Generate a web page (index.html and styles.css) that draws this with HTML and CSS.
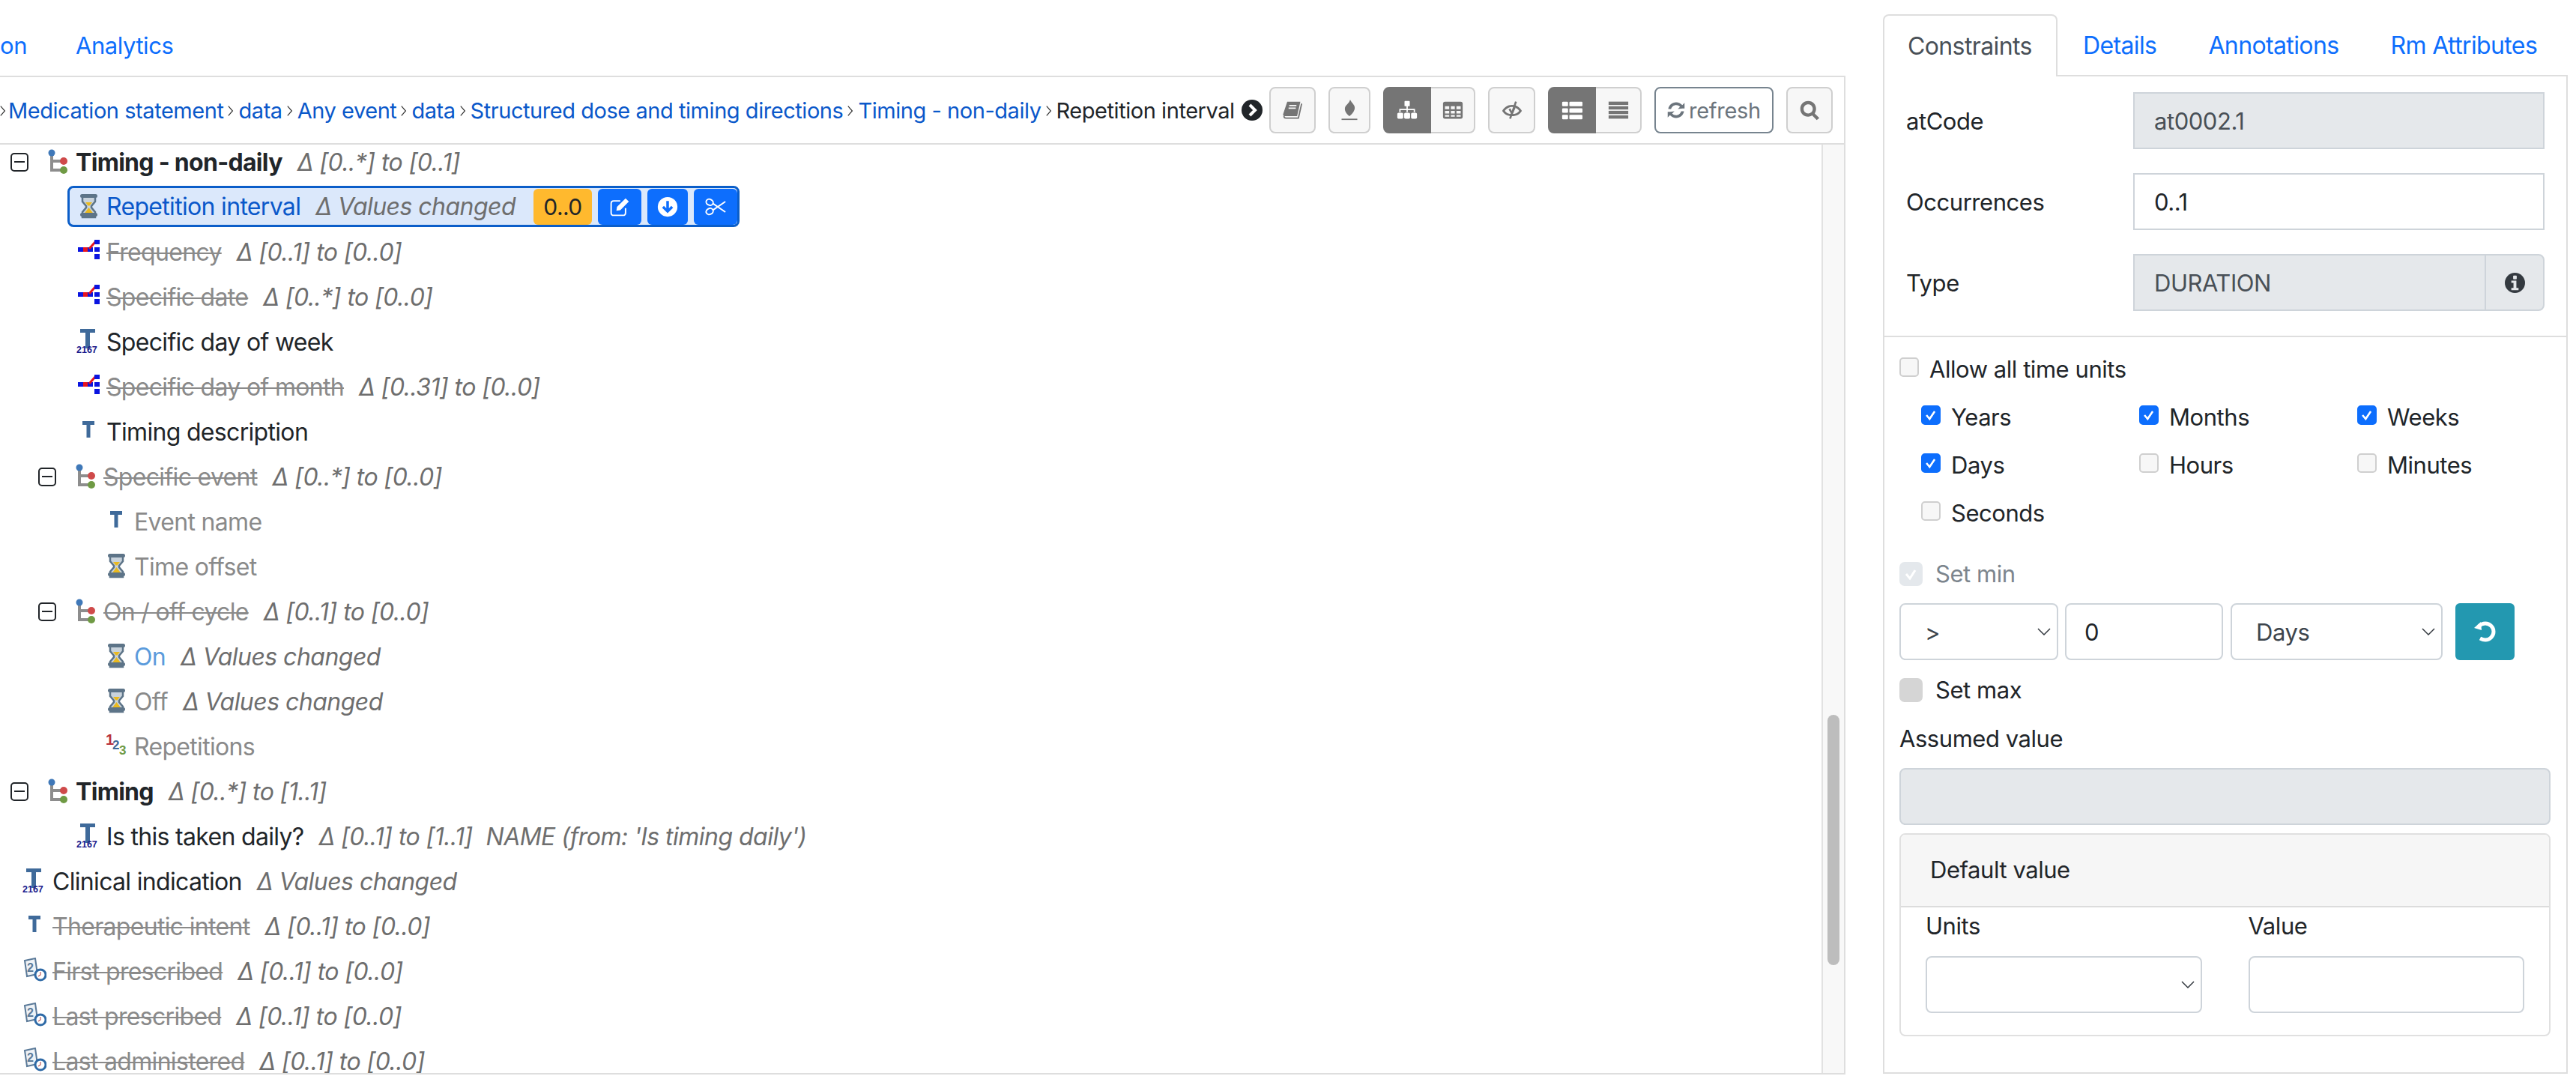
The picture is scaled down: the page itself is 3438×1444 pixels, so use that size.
FILE: index.html
```html
<!DOCTYPE html>
<html lang="en">
<head>
<meta charset="utf-8">
<title>Template editor</title>
<link rel="stylesheet" href="styles.css">
</head>
<body>
<svg class="defs" aria-hidden="true">
  <symbol id="i-hour" viewBox="0 0 32 36">
    <path d="M8 4h17v7l-5 6v2l5 6v7H8v-7l5-6v-2l-5-6z" fill="#c9d3dc" stroke="#5d7488" stroke-width="2.500"/>
    <path d="M12 12h9l-3.500 4.500h-2zM16.500 19l6 8H10.500z" fill="#e9b91f"/>
    <rect x="5" y="1" width="23" height="5" rx="2.500" fill="#5d7488"/>
    <rect x="5" y="26" width="23" height="5" rx="2.500" fill="#5d7488"/>
  </symbol>
  <symbol id="i-clu" viewBox="0 0 32 36">
    <path d="M9 6v23h12M9 17h12" fill="none" stroke="#8d8d8d" stroke-width="4"/>
    <circle cx="9" cy="6" r="4.500" fill="#3f78b8"/>
    <circle cx="25" cy="17" r="5" fill="#cf4a4a"/>
    <circle cx="25" cy="29" r="5" fill="#6f9a44"/>
  </symbol>
  <symbol id="i-code" viewBox="0 0 32 36">
    <path d="M2 15h20" stroke="#0a14e0" stroke-width="6"/>
    <path d="M9 15h6" stroke="#e8141e" stroke-width="6"/>
    <path d="M17 14l8-9" stroke="#e8141e" stroke-width="3"/>
    <rect x="24" y="2" width="7" height="6" fill="#0a14e0"/>
    <rect x="24" y="12" width="7" height="6" fill="#0a14e0"/>
    <rect x="24" y="21" width="7" height="7" fill="#0a14e0"/>
  </symbol>
  <symbol id="i-t" viewBox="0 0 32 36">
    <path d="M8 4h16v5h-5.500v17h-5V9H8z" fill="#3f6a9a"/>
  </symbol>
  <symbol id="i-tn" viewBox="0 0 32 36">
    <path d="M5 1h20v5h-7v21h-6V6H5z" fill="#3f6a9a"/>
    <text x="0" y="33" class="tiny">2167</text>
  </symbol>
  <symbol id="i-num" viewBox="0 0 32 36">
    <text x="2" y="16" class="n1">1</text>
    <text x="11" y="22" class="n2">2</text>
    <text x="20" y="29" class="n3">3</text>
  </symbol>
  <symbol id="i-date" viewBox="0 0 32 36">
    <path d="M3 4l14-3 3 21-14 3z" fill="#eef2f6" stroke="#5b7a99" stroke-width="2"/>
    <text x="6" y="19" class="d2">2</text>
    <circle cx="24" cy="23" r="7" fill="#fff" stroke="#2f6aa6" stroke-width="3"/>
    <path d="M24 19v4l-3 2" fill="none" stroke="#c05a5a" stroke-width="1.200"/>
  </symbol>
</svg>

<main class="page">
  <section class="left">
    <nav class="tabs left-tabs">
      <a class="tab-link clip">on</a>
      <a class="tab-link">Analytics</a>
    </nav>
    <div class="panel">
      <header class="toolbar">
        <div class="crumbs">
          <svg class="sep first" viewBox="0 0 10 20"><path d="M1 2l7 8-7 8"/></svg>
          <a>Medication statement</a>
          <svg class="sep" viewBox="0 0 10 20"><path d="M1 2l7 8-7 8"/></svg>
          <a>data</a>
          <svg class="sep" viewBox="0 0 10 20"><path d="M1 2l7 8-7 8"/></svg>
          <a>Any event</a>
          <svg class="sep" viewBox="0 0 10 20"><path d="M1 2l7 8-7 8"/></svg>
          <a>data</a>
          <svg class="sep" viewBox="0 0 10 20"><path d="M1 2l7 8-7 8"/></svg>
          <a>Structured dose and timing directions</a>
          <svg class="sep" viewBox="0 0 10 20"><path d="M1 2l7 8-7 8"/></svg>
          <a>Timing - non-daily</a>
          <svg class="sep" viewBox="0 0 10 20"><path d="M1 2l7 8-7 8"/></svg>
          <span class="current">Repetition interval</span>
          <svg class="crumb-end" viewBox="0 0 28 28"><circle cx="14" cy="14" r="14" fill="#212529"/><path d="M11 7l7 7-7 7" fill="none" stroke="#fff" stroke-width="4"/></svg>
        </div>
        <div class="tools">
          <button class="tbtn w62"><svg viewBox="0 0 32 32" class="ticon"><path d="M8 3h20l-5 22H4c-2 0-3-2-2-4z" /><path d="M3 25c0 2 1 3 3 3h19l5-22" fill="none" stroke="currentColor" stroke-width="2"/><path d="M11 9h11M10 13h11" stroke="#f7f7f7" stroke-width="2"/></svg></button>
          <button class="tbtn w56"><svg viewBox="0 0 32 32" class="ticon"><path d="M17 0c3 6 8 8 7 14-1 5-5 9-8 11-3-2-7-6-7-11 0-6 7-8 8-14z"/><rect x="4" y="29" width="24" height="2"/></svg></button>
          <div class="group">
            <button class="tbtn seg on w64"><svg viewBox="0 0 32 32" class="ticon"><path d="M13 2h6c.6 0 1 .4 1 1v6c0 .6-.4 1-1 1h-2v4h11v5h-2v-3H17v3h-2v-3H6v3H4v-5h11v-4h-2c-.6 0-1-.4-1-1V3c0-.6.4-1 1-1zM3 20h5c1 0 2 1 2 2v5c0 1-1 2-2 2H3c-1 0-2-1-2-2v-5c0-1 1-2 2-2zm10.500 0h5c1 0 2 1 2 2v5c0 1-1 2-2 2h-5c-1 0-2-1-2-2v-5c0-1 1-2 2-2zM24 20h5c1 0 2 1 2 2v5c0 1-1 2-2 2h-5c-1 0-2-1-2-2v-5c0-1 1-2 2-2z"/></svg></button>
            <button class="tbtn seg-r w59"><svg viewBox="0 0 32 32" class="ticon"><path fill-rule="evenodd" d="M4 3h24c2 0 3 1 3 3v20c0 2-1 3-3 3H4c-2 0-3-1-3-3V6c0-2 1-3 3-3zm0 7v4.500h6.500V10zm9 0v4.500h6V10zm8.500 0v4.500H28V10zM4 17v4h6.500v-4zm9 0v4h6v-4zm8.500 0v4H28v-4zM4 23.500V26h6.500v-2.500zm9 0V26h6v-2.500zm8.500 0V26H28v-2.500z"/></svg></button>
          </div>
          <button class="tbtn w63"><svg viewBox="0 0 32 32" class="ticon"><path fill-rule="evenodd" d="M16 8c7 0 12 4 15 9-3 5-8 8-15 8S4 22 1 17c3-5 8-9 15-9zm0 3c-5 0-9 3-11 6 2 3 6 5 11 5s9-2 11-5c-2-3-6-6-11-6z"/><path d="M22 3l-9 26" stroke="currentColor" stroke-width="3"/><path d="M12 14l4 7 4-9" fill="none" stroke="currentColor" stroke-width="3"/></svg></button>
          <div class="group">
            <button class="tbtn seg on w64"><svg viewBox="0 0 32 32" class="ticon"><rect x="1" y="3" width="9" height="7" rx="1.500"/><rect x="1" y="13" width="9" height="7" rx="1.500"/><rect x="1" y="23" width="9" height="7" rx="1.500"/><rect x="12" y="3" width="20" height="7" rx="1.500"/><rect x="12" y="13" width="20" height="7" rx="1.500"/><rect x="12" y="23" width="20" height="7" rx="1.500"/></svg></button>
            <button class="tbtn seg-r w61"><svg viewBox="0 0 32 32" class="ticon"><rect x="1" y="3" width="30" height="5"/><rect x="1" y="10" width="30" height="5"/><rect x="1" y="17" width="30" height="5"/><rect x="1" y="24" width="30" height="5"/></svg></button>
          </div>
          <button class="tbtn refresh"><svg viewBox="0 0 32 32" class="ticon small"><path d="M27 13h4V3l-4 4C24 4 20 2 16 2 9 2 3 7 2 14h5c1-4 5-7 9-7 3 0 5 1 7 3l-4 4zM5 19H1v10l4-4c3 3 7 5 11 5 7 0 13-5 14-12h-5c-1 4-5 7-9 7-3 0-5-1-7-3l4-4z"/></svg>refresh</button>
          <button class="tbtn w62"><svg viewBox="0 0 32 32" class="ticon"><path fill-rule="evenodd" d="M14 2c7 0 12 5 12 12 0 3-1 5-2 7l7 7-4 3-7-7c-2 1-4 2-6 2C7 26 2 21 2 14S7 2 14 2zm0 5c-4 0-7 3-7 7s3 7 7 7 7-3 7-7-3-7-7-7z"/></svg></button>
        </div>
      </header>
      <div class="tree-wrap">
        <div class="tree">
          <div class="rows">
            <div class="row g1"><span class="toggle"></span><svg class="ic"><use href="#i-clu"/></svg><span class="name b">Timing - non-daily</span><span class="meta">Δ [0..*] to [0..1]</span></div>
            <div class="row l1 sel"><div class="sel-box"><svg class="ic"><use href="#i-hour"/></svg><span class="name sel-name">Repetition interval</span><span class="meta">Δ Values changed</span><span class="badge">0..0</span><button class="act a58"><svg viewBox="0 0 32 32" class="aicon"><path d="M25 18v7c0 2-1 4-4 4H7c-3 0-4-2-4-4V11c0-3 1-4 4-4h10" fill="none" stroke="#fff" stroke-width="2.200"/><path d="M25 3l5 5-13 13-6 1 1-6z" fill="#fff"/></svg></button><button class="act a54"><svg viewBox="0 0 32 32" class="aicon"><circle cx="16" cy="16" r="15" fill="#fff"/><path d="M16 7v16M9 16l7 7 7-7" fill="none" stroke="#0d6efd" stroke-width="4"/></svg></button><button class="act a58"><svg viewBox="0 0 32 32" class="aicon"><g fill="none" stroke="#fff" stroke-width="2.200"><ellipse cx="7" cy="9" rx="5.500" ry="4.500" transform="rotate(25 7 9)"/><ellipse cx="7" cy="23" rx="5.500" ry="4.500" transform="rotate(-25 7 23)"/><path d="M12 11l19 13M12 21L31 8"/></g></svg></button></div></div>
            <div class="row l1"><svg class="ic"><use href="#i-code"/></svg><span class="name gone">Frequency</span><span class="meta">Δ [0..1] to [0..0]</span></div>
            <div class="row l1"><svg class="ic"><use href="#i-code"/></svg><span class="name gone">Specific date</span><span class="meta">Δ [0..*] to [0..0]</span></div>
            <div class="row l1"><svg class="ic"><use href="#i-tn"/></svg><span class="name">Specific day of week</span></div>
            <div class="row l1"><svg class="ic"><use href="#i-code"/></svg><span class="name gone">Specific day of month</span><span class="meta">Δ [0..31] to [0..0]</span></div>
            <div class="row l1"><svg class="ic"><use href="#i-t"/></svg><span class="name">Timing description</span></div>
            <div class="row g2"><span class="toggle"></span><svg class="ic"><use href="#i-clu"/></svg><span class="name gone">Specific event</span><span class="meta">Δ [0..*] to [0..0]</span></div>
            <div class="row l2"><svg class="ic"><use href="#i-t"/></svg><span class="name dim">Event name</span></div>
            <div class="row l2"><svg class="ic"><use href="#i-hour"/></svg><span class="name dim">Time offset</span></div>
            <div class="row g2"><span class="toggle"></span><svg class="ic"><use href="#i-clu"/></svg><span class="name gone">On / off cycle</span><span class="meta">Δ [0..1] to [0..0]</span></div>
            <div class="row l2"><svg class="ic"><use href="#i-hour"/></svg><span class="name light">On</span><span class="meta">Δ Values changed</span></div>
            <div class="row l2"><svg class="ic"><use href="#i-hour"/></svg><span class="name dim">Off</span><span class="meta">Δ Values changed</span></div>
            <div class="row l2"><svg class="ic"><use href="#i-num"/></svg><span class="name dim">Repetitions</span></div>
            <div class="row g1"><span class="toggle"></span><svg class="ic"><use href="#i-clu"/></svg><span class="name b">Timing</span><span class="meta">Δ [0..*] to [1..1]</span></div>
            <div class="row l1"><svg class="ic"><use href="#i-tn"/></svg><span class="name">Is this taken daily?</span><span class="meta">Δ [0..1] to [1..1]</span><span class="meta near">NAME (from: 'Is timing daily')</span></div>
            <div class="row l0"><svg class="ic"><use href="#i-tn"/></svg><span class="name">Clinical indication</span><span class="meta">Δ Values changed</span></div>
            <div class="row l0"><svg class="ic"><use href="#i-t"/></svg><span class="name gone">Therapeutic intent</span><span class="meta">Δ [0..1] to [0..0]</span></div>
            <div class="row l0"><svg class="ic"><use href="#i-date"/></svg><span class="name gone">First prescribed</span><span class="meta">Δ [0..1] to [0..0]</span></div>
            <div class="row l0"><svg class="ic"><use href="#i-date"/></svg><span class="name gone">Last prescribed</span><span class="meta">Δ [0..1] to [0..0]</span></div>
            <div class="row l0"><svg class="ic"><use href="#i-date"/></svg><span class="name gone">Last administered</span><span class="meta">Δ [0..1] to [0..0]</span></div>
          </div>
        </div>
        <div class="scrollbar"><div class="thumb"></div></div>
      </div>
    </div>
  </section>

  <aside class="right">
    <nav class="tabs right-tabs">
      <a class="tab-active">Constraints</a>
      <a class="tab-link t-details">Details</a>
      <a class="tab-link t-annot">Annotations</a>
      <a class="tab-link t-rm">Rm Attributes</a>
    </nav>
    <div class="rpanel">
      <div class="form-top">
        <div class="frow"><label>atCode</label><input class="field ro" value="at0002.1" disabled></div>
        <div class="frow"><label>Occurrences</label><input class="field" value="0..1"></div>
        <div class="frow"><label>Type</label><div class="igroup"><input class="field ro joined" value="DURATION" disabled><span class="addon"><svg viewBox="0 0 28 28" class="info"><circle cx="14" cy="14" r="14" fill="#343a40"/><rect x="11.500" y="4" width="5" height="5" rx="1" fill="#e5e8eb"/><path d="M9 11h7v10h3v3H9v-3h3v-7H9z" fill="#e5e8eb"/></svg></span></div></div>
      </div>
      <div class="form-bottom">
        <label class="chk"><input type="checkbox" class="cb">Allow all time units</label>
        <div class="units">
          <label class="chk"><input type="checkbox" class="cb" checked>Years</label>
          <label class="chk"><input type="checkbox" class="cb" checked>Months</label>
          <label class="chk"><input type="checkbox" class="cb" checked>Weeks</label>
          <label class="chk"><input type="checkbox" class="cb" checked>Days</label>
          <label class="chk"><input type="checkbox" class="cb">Hours</label>
          <label class="chk"><input type="checkbox" class="cb">Minutes</label>
          <label class="chk"><input type="checkbox" class="cb">Seconds</label>
        </div>
        <label class="chk set set-min"><input type="checkbox" class="sw sw-on" checked disabled>Set min</label>
        <div class="minrow">
          <select class="sel-f s1"><option>&gt;</option></select>
          <input class="field rnd num" value="0">
          <select class="sel-f s2"><option>Days</option></select>
          <button class="reset"><svg viewBox="0 0 32 32" class="rsi"><path d="M10 3l1 11-10-3z" fill="#fff"/><path d="M7 9c3-3 6-4 9-4 6 0 11 5 11 11s-5 11-11 11c-3 0-5-1-7-2" fill="none" stroke="#fff" stroke-width="5"/></svg></button>
        </div>
        <label class="chk set set-max"><input type="checkbox" class="sw">Set max</label>
        <div class="assumed-l">Assumed value</div>
        <div class="assumed"></div>
        <div class="card">
          <div class="card-h">Default value</div>
          <div class="card-b">
            <div class="cf"><div class="cl">Units</div><select class="sel-f"></select></div>
            <div class="cf"><div class="cl">Value</div><input class="field rnd"></div>
          </div>
        </div>
      </div>
    </div>
  </aside>
</main>
</body>
</html>
```

FILE: styles.css
```css
* { box-sizing: border-box; }
html, body { margin: 0; height: 1444px; overflow: hidden; background: #fff; }
body { font-family: Inter, "Noto Sans", sans-serif; font-size: 31px; letter-spacing: -0.45px; color: #212529; }
.defs { display: none; }
.tiny { font: 700 12.500px "Liberation Sans", sans-serif; fill: #1a1a8c; letter-spacing: 0; }
.n1 { font: 700 20px "Liberation Sans", sans-serif; fill: #b8323c; }
.n2 { font: 700 17px "Liberation Sans", sans-serif; fill: #3f6a9a; }
.n3 { font: 700 17px "Liberation Sans", sans-serif; fill: #6f9a44; }
.d2 { font: 700 16px "Liberation Sans", sans-serif; fill: #5b7a99; }

.page { display: flex; height: 1444px; }
.left { width: 2463px; flex: none; display: flex; flex-direction: column; }
.right { width: 914px; margin-left: 50px; flex: none; display: flex; flex-direction: column; padding-top: 19px; }

.tabs { display: flex; align-items: center; }
.left-tabs { height: 101px; padding-top: 19px; gap: 69px; }
.tab-link { color: #0d6efd; }
.clip { width: 32px; }

.panel { height: 1333px; border: 2px solid #dedede; border-left: 0; display: flex; flex-direction: column; }
.toolbar { height: 90px; flex: none; border-bottom: 2px solid #dedede; display: flex; align-items: center; padding: 0 15px 0 0; justify-content: space-between; }
.crumbs { display: flex; align-items: center; font-size: 29px; letter-spacing: -0.45px; white-space: nowrap; }
.crumbs a { color: #0a58ca; }
.current { color: #212529; }
.sep { width: 8px; height: 16px; margin: 2px 6px 0; flex: none; fill: none; stroke: #333; stroke-width: 1.500; }
.sep.first { margin: 2px 3px 0 0; }
.crumb-end { width: 28px; height: 28px; margin-left: 9px; }

.tools { display: flex; gap: 17px; align-items: center; }
.group { display: flex; }
.tbtn { height: 62px; background: #f7f7f7; border: 2px solid #cfcfcf; border-radius: 8px; color: #757575; display: flex; align-items: center; justify-content: center; padding: 0; font: inherit; fill: currentColor; }
.w56 { width: 56px; } .w59 { width: 59px; } .w61 { width: 61px; } .w62 { width: 62px; } .w63 { width: 63px; } .w64 { width: 64px; }
.ticon { width: 28px; height: 28px; }
.ticon.small { width: 24px; height: 24px; margin-right: 5px; }
.seg { border-radius: 8px 0 0 8px; }
.seg-r { border-radius: 0 8px 8px 0; border-left: 0; }
.seg.on { background: #757575; border-color: #757575; color: #fff; }
.refresh { width: 159px; background: #fff; border-color: #77848f; color: #6c757d; font-size: 29px; letter-spacing: -0.3px; }

.tree-wrap { flex: 1; display: flex; min-height: 0; }
.tree { flex: 1; overflow: hidden; font-size: 32px; letter-spacing: -0.53px; }
.rows { margin-top: -7px; }
.scrollbar { width: 30px; flex: none; background: #f8f8f8; border-left: 2px solid #e2e2e2; padding: 761px 6px 0 6px; }
.thumb { width: 16px; height: 334px; border-radius: 8px; background: #bdbdbd; }

.row { height: 60px; display: flex; align-items: center; white-space: nowrap; }
.l0 { padding-left: 30px; }
.l1 { padding-left: 102px; }
.l2 { padding-left: 139px; }
.g1 { padding-left: 14px; }
.g2 { padding-left: 51px; }
.ic { width: 32px; height: 36px; flex: none; margin-right: 8px; }
.g1 .ic, .g2 .ic { margin-right: 9px; }
.toggle { width: 24px; height: 25px; border: 2px solid #212529; border-radius: 5px; margin-right: 22px; display: flex; align-items: center; justify-content: center; flex: none; }
.toggle::before { content: ""; width: 14px; height: 2px; background: #212529; }
.name { letter-spacing: -0.68px; }
.name.b { font-weight: 700; letter-spacing: -0.7px; }
.gone { color: #8a8a8a; text-decoration: line-through; text-decoration-thickness: 2px; }
.dim { color: #8a8a8a; }
.light { color: #5b9bdc; }
.meta { font-style: italic; color: #6e6e6e; margin-left: 20px; }
.meta.near { margin-left: 18px; }

.sel { padding-left: 90px; }
.sel-box { width: 897px; height: 55px; border: 3px solid #0b5ec9; border-radius: 8px; background: #dbe8fb; display: flex; align-items: center; padding-left: 9px; margin-top: -1px; }
.sel-name { color: #0a58ca; }
.sel-box .meta { margin-right: auto; }
.badge { width: 78px; height: 48px; background: #ffb92e; border-radius: 6px; color: #212529; display: flex; align-items: center; justify-content: center; font-size: 30px; margin-right: 8px; }
.act { height: 48px; background: #0d6efd; border: 0; border-radius: 6px; padding: 0; display: flex; align-items: center; justify-content: center; margin-right: 8px; }
.act:last-child { margin-right: 0; }
.a58 { width: 58px; } .a54 { width: 54px; }
.aicon { width: 28px; height: 28px; }

.right-tabs { height: 83px; align-items: stretch; border-bottom: 2px solid #dedede; font-size: 32px; letter-spacing: -0.62px; }
.tab-active { width: 233px; border: 2px solid #dedede; border-bottom: 0; border-radius: 8px 8px 0 0; background: #fff; color: #495057; padding-left: 31px; display: flex; align-items: center; margin-bottom: -2px; }
.right-tabs .tab-link { display: flex; align-items: center; padding-top: 2px; }
.t-details { margin-left: 34px; }
.t-annot { margin-left: 69px; }
.t-rm { margin-left: 69px; }

.rpanel { border: 2px solid #dedede; border-top: 0; flex: none; height: 1331px; }
.form-top { padding: 21px 29px 33px 29px; border-bottom: 2px solid #dedede; display: flex; flex-direction: column; gap: 32px; }
.frow { display: grid; grid-template-columns: 303px 1fr; align-items: center; }
.field { height: 76px; width: 100%; border: 2px solid #ced4da; background: #fff; font: inherit; letter-spacing: inherit; color: #212529; padding: 0 26px; border-radius: 0; outline: 0; }
.ro { background: #e5e8eb; color: #495057; opacity: 1; -webkit-text-fill-color: #495057; }
.igroup { display: flex; height: 76px; }
.joined { flex: 1; border-right: 0; min-width: 0; }
.addon { width: 80px; flex: none; background: #e5e8eb; border: 2px solid #ced4da; border-radius: 0 8px 8px 0; display: flex; align-items: center; justify-content: center; }
.info { width: 27px; height: 27px; }

.form-bottom { padding: 23px 21px 0 20px; }
.chk { display: flex; align-items: flex-start; height: 40px; line-height: 40px; }
.cb { appearance: none; width: 26px; height: 26px; margin: 4px 14px 0 0; border: 2px solid #cfcfcf; border-radius: 5px; background: #f7f7f7; flex: none; }
.cb:checked { background: #0d6efd url("data:image/svg+xml,%3Csvg xmlns='http://www.w3.org/2000/svg' viewBox='0 0 26 26'%3E%3Cpath d='M6 13l5 6 8-12' fill='none' stroke='white' stroke-width='3'/%3E%3C/svg%3E") center/contain no-repeat; border-color: #0d6efd; }
.units { display: grid; grid-template-columns: 291px 291px 1fr; row-gap: 24px; margin: 24px 0 0 29px; }
.set { align-items: center; }
.set-min { margin-top: 41px; color: #7c858d; }
.set-max { margin-top: 20px; }
.sw { appearance: none; width: 31px; height: 32px; margin: 0 17px 0 0; border-radius: 7px; background: #d5d5d5; flex: none; }
.sw-on { background: #e4e8ec url("data:image/svg+xml,%3Csvg xmlns='http://www.w3.org/2000/svg' viewBox='0 0 31 32'%3E%3Cpath d='M9 16l5 6 7-11' fill='none' stroke='white' stroke-width='3'/%3E%3C/svg%3E") center/contain no-repeat; }
.minrow { display: flex; height: 76px; margin-top: 19px; }
.sel-f { appearance: none; height: 76px; width: 100%; border: 2px solid #ced4da; border-radius: 8px; background: #fff url("data:image/svg+xml,%3Csvg xmlns='http://www.w3.org/2000/svg' viewBox='0 0 18 10'%3E%3Cpath d='M1 1l8 8 8-8' fill='none' stroke='%23343a40' stroke-width='1.500'/%3E%3C/svg%3E") right 8px center/18px 10px no-repeat; font: inherit; letter-spacing: inherit; color: #3d454d; padding: 0 32px; outline: 0; }
.s1 { width: 212px; flex: none; }
.num { width: 211px; flex: none; margin-left: 9px; padding: 0 24px; }
.s2 { width: 283px; flex: none; margin-left: 10px; }
.rnd { border-radius: 8px; }
.reset { width: 79px; height: 76px; margin-left: 17px; background: #2398b0; border: 0; border-radius: 6px; padding: 0; display: flex; align-items: center; justify-content: center; }
.rsi { width: 32px; height: 32px; }
.assumed-l { margin-top: 25px; height: 40px; line-height: 40px; }
.assumed { margin-top: 19px; height: 76px; background: #e5e8eb; border: 2px solid #ced4da; border-radius: 8px; }
.card { margin-top: 11px; height: 271px; border: 2px solid #e0e0e0; border-radius: 8px; width: 869px; }
.card-h { height: 97px; background: #f6f6f6; border-bottom: 2px solid #dcdcdc; border-radius: 6px 6px 0 0; padding-left: 39px; line-height: 94px; }
.card-b { display: flex; gap: 62px; padding: 5px 33px 0; }
.cf { width: 369px; }
.cl { height: 40px; line-height: 40px; margin-bottom: 20px; }
```
